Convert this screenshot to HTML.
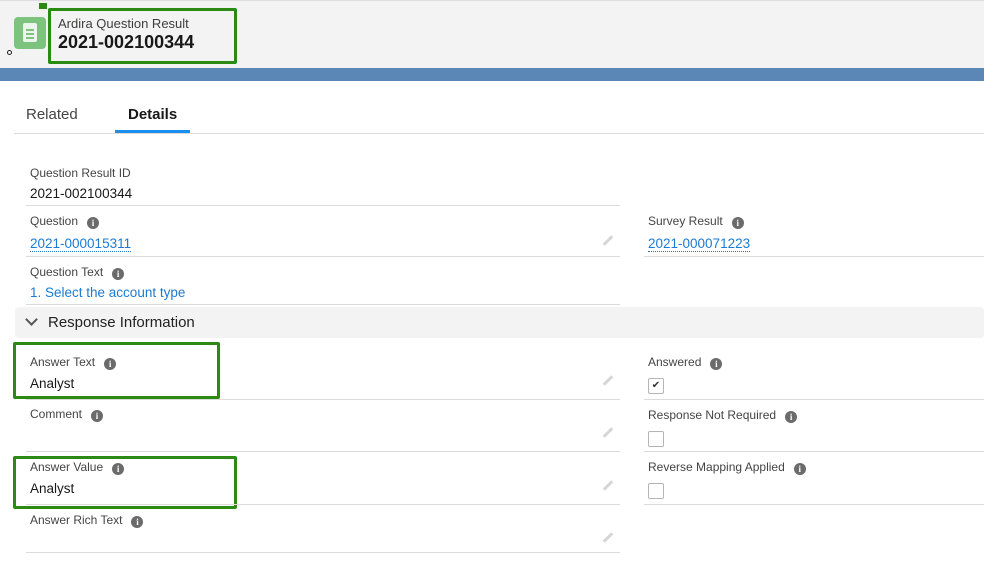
<!DOCTYPE html><html><head><meta charset="utf-8"><style>
*{margin:0;padding:0;box-sizing:border-box}
body{width:984px;height:567px;position:relative;background:#fff;font-family:"Liberation Sans",sans-serif;color:#181818;overflow:hidden}
.a{position:absolute;white-space:nowrap}
.lbl{font-size:12px;color:#444}
.val{font-size:13.5px;color:#181818}
.lnk{font-size:13.5px;color:#1b7bd3}
.ln{position:absolute;height:1px;background:#dddbda}
.i{display:inline-block;width:12px;height:12px;border-radius:50%;background:#6b6b6b;color:#fff;font-size:9px;font-weight:bold;text-align:center;line-height:12px;margin-left:9px;vertical-align:-1px;font-family:"Liberation Serif",serif}
.gb{position:absolute;border:3px solid #2a8a12;border-radius:2px}
.cb{position:absolute;width:16px;height:16px;border:1px solid #b5b5b5;border-radius:2px;background:#fff;font-size:10px;text-align:center;line-height:14px;color:#333}
.pen{position:absolute;width:12px;height:3px;background:#d6d6d6;transform:rotate(-45deg)}
</style></head><body>
<div class="a" style="left:0;top:0;width:984px;height:68px;background:#f3f3f3;border-top:1px solid #ddd"></div>
<div class="a" style="left:0;top:68px;width:984px;height:13px;background:#5b87b6"></div>
<div class="a" style="left:14px;top:17px;width:32px;height:32px;background:#7dc37d;border-radius:4px"></div>
<div class="a" style="left:23px;top:23px;width:14px;height:19px;background:#eaf6ea;border-radius:2px"></div>
<div class="a" style="left:26px;top:29px;width:8px;height:2px;background:#7dc37d"></div>
<div class="a" style="left:26px;top:33px;width:8px;height:2px;background:#7dc37d"></div>
<div class="a" style="left:26px;top:37px;width:8px;height:2px;background:#7dc37d"></div>
<div class="a" style="left:39px;top:3px;width:8px;height:6px;background:#2a8a12"></div>
<div class="a" style="left:7px;top:50px;width:5px;height:5px;border:1px solid #222;border-radius:50%"></div>
<div class="gb" style="left:48px;top:8px;width:189px;height:56px"></div>
<div class="a" style="left:58px;top:16px;font-size:13px;color:#3e3e3c">Ardira Question Result</div>
<div class="a" style="left:58px;top:32px;font-size:18px;font-weight:bold">2021-002100344</div>
<div class="a" style="left:26px;top:106px;font-size:15px;color:#444">Related</div>
<div class="a" style="left:128px;top:106px;font-size:15px;font-weight:bold">Details</div>
<div class="ln" style="left:14px;top:133px;width:970px"></div>
<div class="a" style="left:115px;top:130px;width:75px;height:3px;background:#1b8ff0"></div>

<div class="a lbl" style="left:30px;top:166px">Question Result ID</div>
<div class="a val" style="left:30px;top:186px">2021-002100344</div>
<div class="ln" style="left:26px;top:205px;width:594px"></div>
<div class="a lbl" style="left:30px;top:214px">Question<span class="i">i</span></div>
<div class="a lnk" style="left:30px;top:236px;border-bottom:1px dotted #1b7bd3">2021-000015311</div>
<div class="pen" style="left:602px;top:239px"></div>
<div class="ln" style="left:26px;top:256px;width:594px"></div>
<div class="a lbl" style="left:648px;top:214px">Survey Result<span class="i">i</span></div>
<div class="a lnk" style="left:648px;top:236px;border-bottom:1px dotted #1b7bd3">2021-000071223</div>
<div class="ln" style="left:644px;top:256px;width:340px"></div>
<div class="a lbl" style="left:30px;top:265px">Question Text<span class="i">i</span></div>
<div class="a lnk" style="left:30px;top:285px">1. Select the account type</div>
<div class="ln" style="left:26px;top:304px;width:594px"></div>

<div class="a" style="left:15px;top:307px;width:969px;height:31px;background:#f3f3f3;border-radius:4px"></div>
<div class="a" style="left:27px;top:315px;width:9px;height:9px;border-right:2px solid #555;border-bottom:2px solid #555;transform:rotate(45deg)"></div>
<div class="a" style="left:48px;top:314px;font-size:15px;color:#222">Response Information</div>

<div class="gb" style="left:13px;top:342px;width:207px;height:57px"></div>
<div class="a lbl" style="left:30px;top:355px">Answer Text<span class="i">i</span></div>
<div class="a val" style="left:30px;top:376px">Analyst</div>
<div class="pen" style="left:602px;top:379px"></div>
<div class="ln" style="left:26px;top:399px;width:594px"></div>
<div class="a lbl" style="left:30px;top:407px">Comment<span class="i">i</span></div>
<div class="pen" style="left:602px;top:431px"></div>
<div class="ln" style="left:26px;top:451px;width:594px"></div>
<div class="gb" style="left:13px;top:456px;width:224px;height:53px"></div>
<div class="a lbl" style="left:30px;top:460px">Answer Value<span class="i">i</span></div>
<div class="a val" style="left:30px;top:481px">Analyst</div>
<div class="pen" style="left:602px;top:484px"></div>
<div class="ln" style="left:26px;top:504px;width:594px"></div>
<div class="a lbl" style="left:30px;top:513px">Answer Rich Text<span class="i">i</span></div>
<div class="pen" style="left:602px;top:536px"></div>
<div class="ln" style="left:26px;top:552px;width:594px"></div>

<div class="a lbl" style="left:648px;top:355px">Answered<span class="i">i</span></div>
<div class="cb" style="left:648px;top:378px">✔</div>
<div class="ln" style="left:644px;top:399px;width:340px"></div>
<div class="a lbl" style="left:648px;top:408px">Response Not Required<span class="i">i</span></div>
<div class="cb" style="left:648px;top:431px"></div>
<div class="ln" style="left:644px;top:451px;width:340px"></div>
<div class="a lbl" style="left:648px;top:460px">Reverse Mapping Applied<span class="i">i</span></div>
<div class="cb" style="left:648px;top:483px"></div>
<div class="ln" style="left:644px;top:504px;width:340px"></div>
</body></html>
